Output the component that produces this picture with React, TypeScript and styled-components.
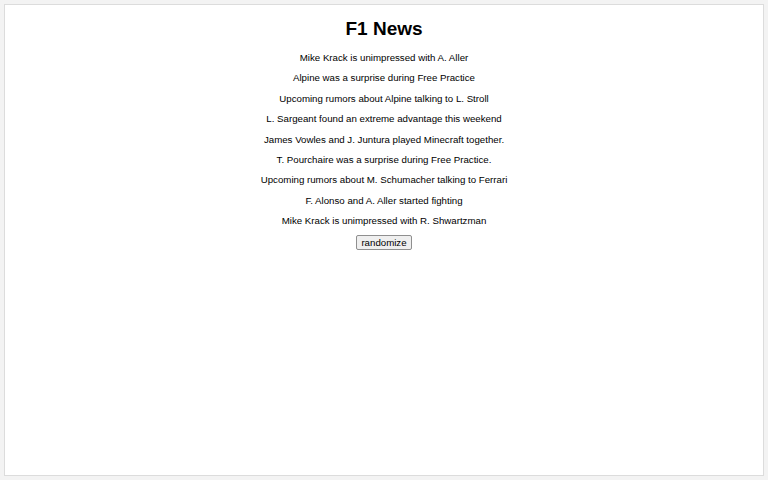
import React, { useState } from 'react'
import styled, { createGlobalStyle } from 'styled-components'

const GlobalStyle = createGlobalStyle`
	html, body {
		margin: 0;
		padding: 0;
		background: #f3f3f3;
	}
	body {
		padding: 4px;
		font-family: "Liberation Sans", Arial, sans-serif;
	}
`

const Panel = styled.main`
	box-sizing: border-box;
	height: 472px;
	background: #ffffff;
	border: 1px solid #dcdcdc;
	display: flex;
	flex-direction: column;
	align-items: center;
	padding-top: 13px;
`

const Title = styled.h1`
	margin: 0 0 12px;
	font-size: 19px;
	line-height: 22px;
	font-weight: bold;
	color: #000;
`

const Headline = styled.p`
	margin: 0 0 8px;
	font-size: 9.7px;
	line-height: 12.4px;
	color: #000;
`

const RandomButton = styled.button`
	margin-top: -1px;
	font-family: "Liberation Sans", Arial, sans-serif;
	font-size: 9.7px;
	line-height: 11px;
	padding: 1px 4px;
	background: #efefef;
	border: 1px solid #8f8f8f;
	border-radius: 2px;
	color: #000;
`

const drivers = ['A. Aller', 'L. Stroll', 'R. Shwartzman', 'M. Schumacher', 'F. Alonso', 'T. Pourchaire', 'L. Sargeant', 'J. Juntura']

const initial = [
	'Mike Krack is unimpressed with A. Aller',
	'Alpine was a surprise during Free Practice',
	'Upcoming rumors about Alpine talking to L. Stroll',
	'L. Sargeant found an extreme advantage this weekend',
	'James Vowles and J. Juntura played Minecraft together.',
	'T. Pourchaire was a surprise during Free Practice.',
	'Upcoming rumors about M. Schumacher talking to Ferrari',
	'F. Alonso and A. Aller started fighting',
	'Mike Krack is unimpressed with R. Shwartzman',
]

const pick = () => drivers[Math.floor(Math.random() * drivers.length)]

export default function App() {
	const [news, setNews] = useState(initial)

	const randomize = () => {
		setNews([
			`Mike Krack is unimpressed with ${pick()}`,
			'Alpine was a surprise during Free Practice',
			`Upcoming rumors about Alpine talking to ${pick()}`,
			`${pick()} found an extreme advantage this weekend`,
			`James Vowles and ${pick()} played Minecraft together.`,
			`${pick()} was a surprise during Free Practice.`,
			`Upcoming rumors about ${pick()} talking to Ferrari`,
			`${pick()} and ${pick()} started fighting`,
			`Mike Krack is unimpressed with ${pick()}`,
		])
	}

	return (
		<>
			<GlobalStyle />
			<Panel>
				<Title>F1 News</Title>
				{news.map((line, i) => (
					<Headline key={i}>{line}</Headline>
				))}
				<RandomButton onClick={randomize}>randomize</RandomButton>
			</Panel>
		</>
	)
}
